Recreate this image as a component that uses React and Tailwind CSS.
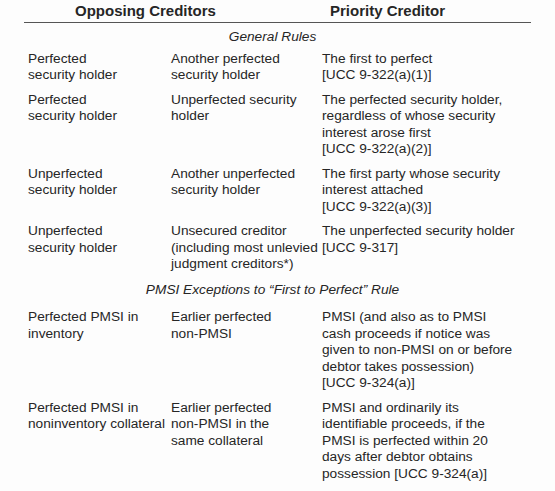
import React from "react";

const general = [
  ["Perfected\nsecurity holder", "Another perfected\nsecurity holder", "The first to perfect\n[UCC 9-322(a)(1)]"],
  [
    "Perfected\nsecurity holder",
    "Unperfected security\nholder",
    "The perfected security holder,\nregardless of whose security\ninterest arose first\n[UCC 9-322(a)(2)]",
  ],
  [
    "Unperfected\nsecurity holder",
    "Another unperfected\nsecurity holder",
    "The first party whose security\ninterest attached\n[UCC 9-322(a)(3)]",
  ],
  [
    "Unperfected\nsecurity holder",
    "Unsecured creditor\n(including most unlevied\njudgment creditors*)",
    "The unperfected security holder\n[UCC 9-317]",
  ],
];

const pmsi = [
  [
    "Perfected PMSI in\ninventory",
    "Earlier perfected\nnon-PMSI",
    "PMSI (and also as to PMSI\ncash proceeds if notice was\ngiven to non-PMSI on or before\ndebtor takes possession)\n[UCC 9-324(a)]",
  ],
  [
    "Perfected PMSI in\nnoninventory collateral",
    "Earlier perfected\nnon-PMSI in the\nsame collateral",
    "PMSI and ordinarily its\nidentifiable proceeds, if the\nPMSI is perfected within 20\ndays after debtor obtains\npossession [UCC 9-324(a)]",
  ],
];

function Row({ cells }) {
  return (
    <div className="grid grid-cols-[143px_151px_1fr] pb-[8px]">
      {cells.map((c, i) => (
        <div key={i} className="whitespace-pre-line">
          {c}
        </div>
      ))}
    </div>
  );
}

export default function App() {
  return (
    <div
      className="w-[555px] h-[491px] bg-[#fdfdfd] text-[#262626] text-[13.7px] leading-[16.5px] overflow-hidden"
      style={{ fontFamily: '"Liberation Sans", Arial, sans-serif' }}
    >
      <div className="ml-[24px] w-[507px]">
        <div className="flex font-bold text-[15px] leading-[18px] pt-[2px] pb-[2px] border-b-[1.5px] border-[#555]">
          <div className="w-[298px] pl-[51px]">Opposing Creditors</div>
          <div className="pl-[8px]">Priority Creditor</div>
        </div>
        <div className="text-center italic pt-[6px] pb-[5px] pr-[10px]">General Rules</div>
        <div className="pl-[4px]">
          {general.map((r, i) => (
            <Row key={i} cells={r} />
          ))}
        </div>
        <div className="text-center italic pt-[1px] pb-[11px] pr-[10px]">
          PMSI Exceptions to “First to Perfect” Rule
        </div>
        <div className="pl-[4px]">
          {pmsi.map((r, i) => (
            <Row key={i} cells={r} />
          ))}
        </div>
      </div>
    </div>
  );
}
